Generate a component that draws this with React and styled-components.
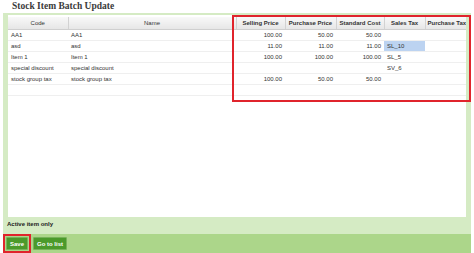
import React from 'react';
import styled, { createGlobalStyle } from 'styled-components';

const GlobalStyle = createGlobalStyle`
  html, body {
    margin: 0;
    padding: 0;
    background: #ffffff;
  }
  body {
    font-family: "Liberation Sans", Arial, sans-serif;
    color: #333333;
  }
`;

const columns = [
  { key: 'code', label: 'Code', width: 60, align: 'left', bold: false },
  { key: 'name', label: 'Name', width: 168, align: 'left', bold: false },
  { key: 'selling', label: 'Selling Price', width: 49, align: 'right', bold: true },
  { key: 'purchase', label: 'Purchase Price', width: 51, align: 'right', bold: true },
  { key: 'standard', label: 'Standard Cost', width: 48, align: 'right', bold: true },
  { key: 'salesTax', label: 'Sales Tax', width: 41, align: 'left', bold: true },
  { key: 'purchaseTax', label: 'Purchase Tax', width: 41, align: 'left', bold: true },
];

const rows = [
  { code: 'AA1', name: 'AA1', selling: '100.00', purchase: '50.00', standard: '50.00', salesTax: '', purchaseTax: '' },
  { code: 'asd', name: 'asd', selling: '11.00', purchase: '11.00', standard: '11.00', salesTax: 'SL_10', purchaseTax: '', selected: true },
  { code: 'Item 1', name: 'Item 1', selling: '100.00', purchase: '100.00', standard: '100.00', salesTax: 'SL_5', purchaseTax: '' },
  { code: 'special discount', name: 'special discount', selling: '', purchase: '', standard: '', salesTax: 'SV_6', purchaseTax: '' },
  { code: 'stock group tax', name: 'stock group tax', selling: '100.00', purchase: '50.00', standard: '50.00', salesTax: '', purchaseTax: '' },
];

const App = () => {
  return (
    <Page>
      <GlobalStyle />
      <Title>Stock Item Batch Update</Title>

      <Panel>
        <GridArea>
          <Grid>
            <colgroup>
              {columns.map(c => (
                <col key={c.key} style={{ width: c.width }} />
              ))}
            </colgroup>
            <thead>
              <tr>
                {columns.map(c => (
                  <HeadCell key={c.key} bold={c.bold}>{c.label}</HeadCell>
                ))}
              </tr>
            </thead>
            <tbody>
              {rows.map(r => (
                <Row key={r.code}>
                  {columns.map(c => (
                    <Cell
                      key={c.key}
                      align={c.align}
                      selected={r.selected && c.key === 'salesTax'}
                    >
                      {r[c.key]}
                    </Cell>
                  ))}
                </Row>
              ))}
              <Row>
                {columns.map(c => <Cell key={c.key} />)}
              </Row>
            </tbody>
          </Grid>
        </GridArea>
        <FilterStrip>Active item only</FilterStrip>
      </Panel>

      <ButtonBar>
        <Highlight>
          <Button>Save</Button>
        </Highlight>
        <Button>Go to list</Button>
      </ButtonBar>

      <Callout />
    </Page>
  );
};

export default App;

const Page = styled.div`
  position: relative;
  width: 474px;
  height: 253px;
  overflow: hidden;
`;

const Title = styled.div`
  height: 13px;
  line-height: 12px;
  padding-left: 12px;
  font-family: "Liberation Serif", "Times New Roman", serif;
  font-weight: bold;
  font-size: 9.5px;
  color: #3a3a3a;
`;

const Panel = styled.div`
  margin: 0 3px;
  background: #d5ebc4;
  padding: 2px 5px 0 5px;
  display: flex;
  flex-direction: column;
`;

const GridArea = styled.div`
  height: 202px;
  background: #ffffff;
  overflow: hidden;
  padding-top: 2px;
  box-sizing: border-box;
`;

const Grid = styled.table`
  table-layout: fixed;
  border-collapse: collapse;
  width: 458px;
  font-size: 6px;
`;

const HeadCell = styled.th`
  height: 12px;
  padding: 0 2px;
  font-weight: ${p => (p.bold ? 'bold' : 'normal')};
  text-align: center;
  white-space: nowrap;
  overflow: hidden;
  color: #333333;
  background: linear-gradient(#f8f8f8, #e6e6e6);
  border-right: 1px solid #d2d2d2;
  border-bottom: 1px solid #cfcfcf;
`;

const Row = styled.tr`
  height: 11px;
  border-bottom: 1px solid #efefef;
`;

const Cell = styled.td`
  padding: 0 3px;
  height: 10px;
  text-align: ${p => p.align || 'left'};
  white-space: nowrap;
  overflow: hidden;
  color: #333333;
  background: ${p => (p.selected ? '#bcd3f1' : 'transparent')};
`;

const FilterStrip = styled.div`
  height: 17px;
  line-height: 15px;
  margin-left: -1px;
  font-size: 6px;
  font-weight: bold;
  color: #222222;
`;

const ButtonBar = styled.div`
  margin: 0 3px;
  height: 19px;
  background: #acd68a;
  display: flex;
  align-items: center;
  gap: 2px;
`;

const Highlight = styled.div`
  height: 19px;
  box-sizing: border-box;
  border: 2px solid #e0242c;
  padding: 0 1px;
  display: flex;
  align-items: center;
`;

const Button = styled.button`
  height: 13px;
  padding: 0 3px;
  border: 1px solid #77b25a;
  border-radius: 1px;
  background: #4b9a2b;
  color: #ffffff;
  font-family: "Liberation Sans", Arial, sans-serif;
  font-size: 6px;
  font-weight: bold;
  cursor: pointer;
`;

const Callout = styled.div`
  position: absolute;
  left: 232px;
  top: 15px;
  width: 239px;
  height: 87px;
  box-sizing: border-box;
  border: 2px solid #e0242c;
  pointer-events: none;
`;
